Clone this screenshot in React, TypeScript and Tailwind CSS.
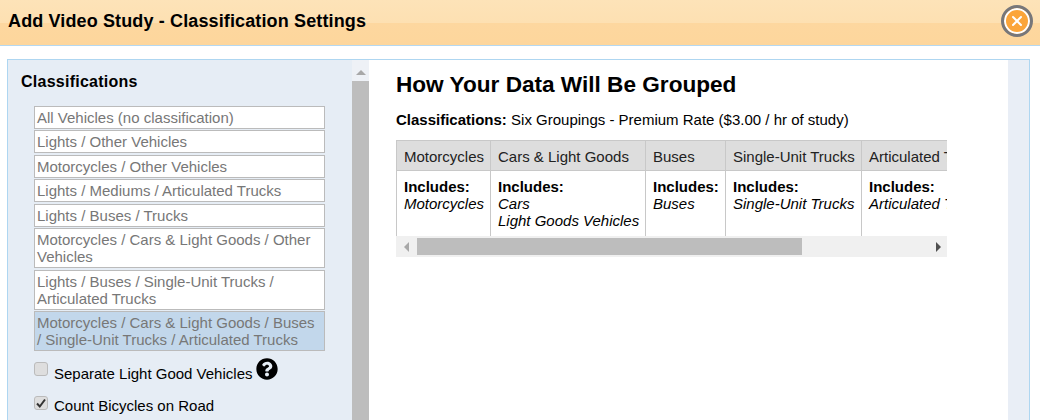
import { FaQuestionCircle } from "react-icons/fa";

const classifications = [
  "All Vehicles (no classification)",
  "Lights / Other Vehicles",
  "Motorcycles / Other Vehicles",
  "Lights / Mediums / Articulated Trucks",
  "Lights / Buses / Trucks",
  "Motorcycles / Cars & Light Goods / Other Vehicles",
  "Lights / Buses / Single-Unit Trucks / Articulated Trucks",
  "Motorcycles / Cars & Light Goods / Buses / Single-Unit Trucks / Articulated Trucks",
];

const groups = [
  { name: "Motorcycles", width: "w-[94px]", includes: ["Motorcycles"] },
  { name: "Cars & Light Goods", width: "w-[155px]", includes: ["Cars", "Light Goods Vehicles"] },
  { name: "Buses", width: "w-[80px]", includes: ["Buses"] },
  { name: "Single-Unit Trucks", width: "w-[136px]", includes: ["Single-Unit Trucks"] },
  { name: "Articulated Trucks", width: "w-[136px]", includes: ["Articulated Trucks"] },
];

export default function App() {
  return (
    <div className="relative h-[420px] w-[1040px] overflow-hidden bg-white font-['Liberation_Sans',Arial,sans-serif] text-[15px] leading-[17px] text-black">
      {/* Header */}
      <div className="h-[46px] border-b border-[#b5d8f0] bg-[linear-gradient(#fde3b8_0,#fde0b2_50%,#fdd79f_52%,#fdd69c_100%)] pl-2 pt-[11px]">
        <h1 className="text-[18px] font-bold leading-[20px] tracking-[0.13px]">Add Video Study - Classification Settings</h1>
      </div>
      <button className="absolute right-[7px] top-[5px] flex h-[32px] w-[32px] items-center justify-center rounded-full border-[3px] border-[#77777a] bg-[#fba53a] p-0 shadow-[inset_0_0_0_2px_#ffffff]">
        <svg width="14" height="14" viewBox="0 0 14 14">
          <path d="M3 3L11 11M11 3L3 11" stroke="#fff" strokeWidth="2" strokeLinecap="round" />
        </svg>
      </button>

      {/* Body */}
      <div className="ml-[7px] mt-[13px] flex h-[370px] w-[1023px] border-l border-r border-t border-[#aed6f1]">
        {/* Left panel */}
        <div className="w-[344px] shrink-0 bg-[#e6edf5] pl-[13px] pt-[13px]">
          <h2 className="text-[16px] font-bold leading-[18px] tracking-[0.25px]">Classifications</h2>
          <div className="ml-[13px] mt-[14.5px] flex w-[291px] flex-col gap-[1.5px] text-[#777777]">
            {classifications.map((c, i) => (
              <div
                key={c}
                className={`border border-[#bbbbbb] px-[2px] py-[2px] ${i === classifications.length - 1 ? "bg-[#c2d7eb]" : "bg-white"}`}
              >
                {c}
              </div>
            ))}
          </div>
          <div className="ml-[13px] mt-[7px] flex h-[24px] items-start">
            <span className="mt-[4px] h-[14px] w-[14px] rounded-[3px] border border-[#bbbbbb] bg-[#dedede]" />
            <span className="ml-[6px] mt-[7px]">Separate Light Good Vehicles</span>
            <FaQuestionCircle className="ml-[4px]" size={22} color="#000" />
          </div>
          <div className="ml-[13px] mt-[13px] flex items-start">
            <span className="mt-[1px] flex h-[14px] w-[14px] items-center justify-center rounded-[3px] border border-[#bbbbbb] bg-[#dedede]">
              <svg width="12" height="12" viewBox="0 0 12 12">
                <path d="M2 6.5L4.8 9.5L10 2.5" fill="none" stroke="#333" strokeWidth="2" />
              </svg>
            </span>
            <span className="ml-[6px] mt-[2px]">Count Bicycles on Road</span>
          </div>
        </div>

        {/* Left panel scrollbar */}
        <div className="flex w-[17px] shrink-0 flex-col bg-[#eef1f6]">
          <div className="flex h-[21px] items-center justify-center pt-[3px]">
            <div className="h-0 w-0 border-x-[5px] border-b-[5px] border-x-transparent border-b-[#a8a8a8]" />
          </div>
          <div className="flex-1 bg-[#bdbdbd]" />
        </div>

        {/* Right panel */}
        <div className="w-[639px] shrink-0 bg-white pl-[27px] pt-[11px]">
          <h2 className="text-[22.6px] font-bold leading-[28px]">How Your Data Will Be Grouped</h2>
          <p className="mt-[12px]">
            <b>Classifications:</b> Six Groupings - Premium Rate ($3.00 / hr of study)
          </p>
          <div className="mt-[12px] w-[551px] overflow-hidden">
            <div className="flex h-[31px] w-[601px] border-y border-l border-[#c8c8c8] bg-[#dddddd] text-[#222222]">
              {groups.map((g) => (
                <div key={g.name} className={`${g.width} shrink-0 whitespace-nowrap border-r border-[#c8c8c8] pl-[7px] pt-[7px]`}>
                  {g.name}
                </div>
              ))}
            </div>
            <div className="flex h-[65px] w-[601px] border-l border-[#c8c8c8]">
              {groups.map((g) => (
                <div key={g.name} className={`${g.width} shrink-0 whitespace-nowrap border-r border-[#c8c8c8] pl-[7px] pt-[7px]`}>
                  <b>Includes:</b>
                  {g.includes.map((t) => (
                    <div key={t} className="italic">{t}</div>
                  ))}
                </div>
              ))}
            </div>
            <div className="flex h-[21px] items-center bg-[#f0f0f0]">
              <div className="flex w-[21px] shrink-0 justify-center">
                <div className="h-0 w-0 border-y-[5px] border-r-[5px] border-y-transparent border-r-[#a8a8a8]" />
              </div>
              <div className="h-[17px] w-[385px] bg-[#bdbdbd]" />
              <div className="flex flex-1 justify-end pr-[6px]">
                <div className="h-0 w-0 border-y-[5px] border-l-[5px] border-y-transparent border-l-[#505050]" />
              </div>
            </div>
          </div>
        </div>

        {/* Right strip */}
        <div className="flex-1 bg-[#e9eef6]" />
      </div>
    </div>
  );
}
